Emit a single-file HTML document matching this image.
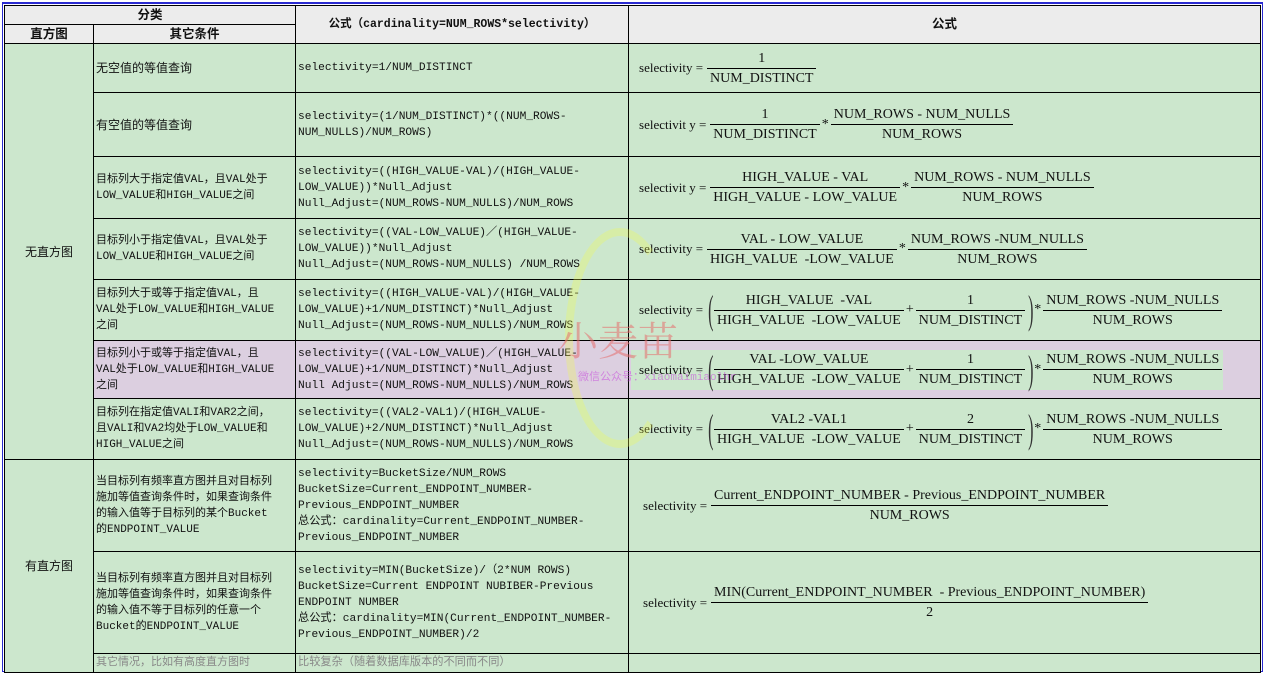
<!DOCTYPE html>
<html><head><meta charset="utf-8"><style>
*{margin:0;padding:0;box-sizing:border-box}
body{width:1265px;height:682px;background:#fff;position:relative;overflow:hidden;font-family:"Liberation Sans","Noto Sans CJK SC",sans-serif}
#frame{position:absolute;left:2px;top:2px;width:1261px;height:670px;border:1px solid #2a2ad0;border-top:2px solid #2a2ad0}
table{position:absolute;left:4px;top:5px;border-collapse:collapse;table-layout:fixed;width:1256px}
td{border:1px solid #000;background:#cce7cd;font-size:12px;color:#111;vertical-align:middle;padding:0 2px;line-height:16px;overflow:hidden;white-space:nowrap}
.h td{background:#ececec;font-weight:bold;text-align:center;font-size:12.5px;line-height:17px}
.m{font-family:"Liberation Mono","Noto Sans CJK SC",monospace;font-size:11.2px;line-height:16px}
.k{font-family:"Liberation Mono","Noto Sans CJK SC",monospace;font-size:11px;line-height:16px}
.c{text-align:center}
.p td.pp{background:#dccfe0}
.f{font-family:"Liberation Serif",serif;font-size:14px;display:flex;align-items:center;padding-left:8px;white-space:nowrap;height:40px}
.sel{font-size:13px;margin-right:3px}
.fr{display:inline-flex;flex-direction:column;text-align:center;margin:0 1px}
.fr>span{line-height:19px;padding:0 3px}
.fr>span:first-child{border-bottom:1px solid #000}
.br{font-size:40px;line-height:40px;transform:scaleX(.4);display:inline-block;width:7px;color:#333;text-align:center}
.op{margin:0 1px}
#wm{position:absolute;left:558px;top:310px;font-family:"Noto Serif CJK SC",serif;font-size:40px;color:rgba(230,110,110,.55)}
#wm2{position:absolute;left:578px;top:368px;font-size:11px;color:rgba(200,80,220,.6);font-family:"Liberation Mono",monospace}
#ring{position:absolute;left:565px;top:228px;width:110px;height:220px;border-radius:50%;border:8px solid rgba(240,250,80,.3);border-right-color:transparent}
</style></head><body>
<div id="frame"></div>
<table>
<colgroup><col style="width:89px"><col style="width:202px"><col style="width:333px"><col style="width:632px"></colgroup>
<tr class="h" style="height:19px"><td colspan="2">分类</td><td rowspan="2" class="m" style="font-weight:bold;font-size:11.5px">公式（cardinality=NUM_ROWS*selectivity）</td><td rowspan="2">公式</td></tr>
<tr class="h" style="height:19px"><td>直方图</td><td>其它条件</td></tr>
<tr style="height:49px"><td rowspan="7" class="c">无直方图</td><td>无空值的等值查询</td><td class="m">selectivity=1/NUM_DISTINCT</td><td><div class="f"><span class="sel">selectivity =</span><span class="fr"><span>1</span><span>NUM_DISTINCT</span></span></div></td></tr>
<tr style="height:64px"><td>有空值的等值查询</td><td class="m">selectivity=(1/NUM_DISTINCT)*((NUM_ROWS-<br>NUM_NULLS)/NUM_ROWS)</td><td><div class="f"><span class="sel">selectivit y =</span><span class="fr"><span>1</span><span>NUM_DISTINCT</span></span><span class="op">*</span><span class="fr"><span>NUM_ROWS - NUM_NULLS</span><span>NUM_ROWS</span></span></div></td></tr>
<tr style="height:62px"><td class="k">目标列大于指定值VAL，且VAL处于<br>LOW_VALUE和HIGH_VALUE之间</td><td class="m">selectivity=((HIGH_VALUE-VAL)/(HIGH_VALUE-<br>LOW_VALUE))*Null_Adjust<br>Null_Adjust=(NUM_ROWS-NUM_NULLS)/NUM_ROWS</td><td><div class="f"><span class="sel">selectivit y =</span><span class="fr"><span>HIGH_VALUE - VAL</span><span>HIGH_VALUE - LOW_VALUE</span></span><span class="op">*</span><span class="fr"><span>NUM_ROWS - NUM_NULLS</span><span>NUM_ROWS</span></span></div></td></tr>
<tr style="height:61px"><td class="k">目标列小于指定值VAL，且VAL处于<br>LOW_VALUE和HIGH_VALUE之间</td><td class="m">selectivity=((VAL-LOW_VALUE)／(HIGH_VALUE-<br>LOW_VALUE))*Null_Adjust<br>Null_Adjust=(NUM_ROWS-NUM_NULLS) /NUM_ROWS</td><td><div class="f"><span class="sel">selectivity =</span><span class="fr"><span>VAL - LOW_VALUE</span><span>HIGH_VALUE &nbsp;-LOW_VALUE</span></span><span class="op">*</span><span class="fr"><span>NUM_ROWS -NUM_NULLS</span><span>NUM_ROWS</span></span></div></td></tr>
<tr style="height:61px"><td class="k">目标列大于或等于指定值VAL，且<br>VAL处于LOW_VALUE和HIGH_VALUE<br>之间</td><td class="m">selectivity=((HIGH_VALUE-VAL)/(HIGH_VALUE-<br>LOW_VALUE)+1/NUM_DISTINCT)*Null_Adjust<br>Null_Adjust=(NUM_ROWS-NUM_NULLS)/NUM_ROWS</td><td><div class="f"><span class="sel">selectivity =</span><span class="br">(</span><span class="fr"><span>HIGH_VALUE &nbsp;-VAL</span><span>HIGH_VALUE &nbsp;-LOW_VALUE</span></span><span class="op">+</span><span class="fr"><span>1</span><span>NUM_DISTINCT</span></span><span class="br">)</span><span class="op">*</span><span class="fr"><span>NUM_ROWS -NUM_NULLS</span><span>NUM_ROWS</span></span></div></td></tr>
<tr class="p" style="height:58px"><td class="k pp">目标列小于或等于指定值VAL，且<br>VAL处于LOW_VALUE和HIGH_VALUE<br>之间</td><td class="m pp">selectivity=((VAL-LOW_VALUE)／(HIGH_VALUE-<br>LOW_VALUE)+1/NUM_DISTINCT)*Null_Adjust<br>Null Adjust=(NUM_ROWS-NUM_NULLS)/NUM_ROWS</td><td class="pp"><div class="f" style="background:#cce7cd;width:592px"><span class="sel">selectivity =</span><span class="br">(</span><span class="fr"><span>VAL -LOW_VALUE</span><span>HIGH_VALUE &nbsp;-LOW_VALUE</span></span><span class="op">+</span><span class="fr"><span>1</span><span>NUM_DISTINCT</span></span><span class="br">)</span><span class="op">*</span><span class="fr"><span>NUM_ROWS -NUM_NULLS</span><span>NUM_ROWS</span></span></div></td></tr>
<tr style="height:61px"><td class="k">目标列在指定值VALI和VAR2之间，<br>且VALI和VA2均处于LOW_VALUE和<br>HIGH_VALUE之间</td><td class="m">selectivity=((VAL2-VAL1)/(HIGH_VALUE-<br>LOW_VALUE)+2/NUM_DISTINCT)*Null_Adjust<br>Null_Adjust=(NUM_ROWS-NUM_NULLS)/NUM_ROWS</td><td><div class="f"><span class="sel">selectivity =</span><span class="br">(</span><span class="fr"><span>VAL2 -VAL1</span><span>HIGH_VALUE &nbsp;-LOW_VALUE</span></span><span class="op">+</span><span class="fr"><span>2</span><span>NUM_DISTINCT</span></span><span class="br">)</span><span class="op">*</span><span class="fr"><span>NUM_ROWS -NUM_NULLS</span><span>NUM_ROWS</span></span></div></td></tr>
<tr style="height:92px"><td rowspan="3" class="c">有直方图</td><td class="k">当目标列有频率直方图并且对目标列<br>施加等值查询条件时，如果查询条件<br>的输入值等于目标列的某个Bucket<br>的ENDPOINT_VALUE</td><td class="m">selectivity=BucketSize/NUM_ROWS<br>BucketSize=Current_ENDPOINT_NUMBER-<br>Previous_ENDPOINT_NUMBER<br>总公式：cardinality=Current_ENDPOINT_NUMBER-<br>Previous_ENDPOINT_NUMBER</td><td><div class="f" style="padding-left:12px"><span class="sel">selectivity =</span><span class="fr"><span>Current_ENDPOINT_NUMBER - Previous_ENDPOINT_NUMBER</span><span>NUM_ROWS</span></span></div></td></tr>
<tr style="height:102px"><td class="k">当目标列有频率直方图并且对目标列<br>施加等值查询条件时，如果查询条件<br>的输入值不等于目标列的任意一个<br>Bucket的ENDPOINT_VALUE</td><td class="m">selectivity=MIN(BucketSize)/（2*NUM ROWS)<br>BucketSize=Current ENDPOINT NUBIBER-Previous<br>ENDPOINT NUMBER<br>总公式：cardinality=MIN(Current_ENDPOINT_NUMBER-<br>Previous_ENDPOINT_NUMBER)/2</td><td><div class="f" style="padding-left:12px"><span class="sel">selectivity =</span><span class="fr"><span>MIN(Current_ENDPOINT_NUMBER &nbsp;- Previous_ENDPOINT_NUMBER)</span><span>2</span></span></div></td></tr>
<tr style="height:19px"><td class="k" style="color:#888">其它情况，比如有高度直方图时</td><td class="m" style="color:#888">比较复杂（随着数据库版本的不同而不同）</td><td></td></tr>
</table>
<div id="ring"></div>
<div id="wm">小麦苗</div>
<div id="wm2">微信公众号：xiaomaimiaolhr</div>
</body></html>
